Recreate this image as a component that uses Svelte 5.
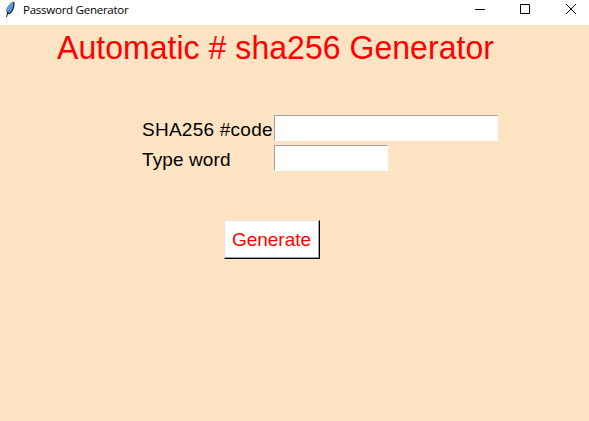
<script>
  let code = $state('');
  let word = $state('');
</script>

<div class="window">
  <header class="titlebar">
    <svg class="feather" width="12" height="18" viewBox="0 0 12 18">
      <path d="M8.7 .8 C5.5 2 2.3 5.5 1.3 9.5 L1.8 12.4 L4.5 12.4 C7.5 10.5 9.6 5.5 8.7 .8Z" fill="#64a5ee" />
      <path d="M8 1 C4.5 3 2 6 1.3 10.5" stroke="#54657a" stroke-width=".8" />
      <path d="M8.8 .8 C9.6 5.5 7.5 10.5 4.5 12.5 L2.3 12.6" stroke="#101820" stroke-width="1.2" />
      <path d="M7 4.5 L3 11" stroke="#3978c2" stroke-width=".8" />
      <path d="M3 10.5 L1.5 16" stroke="#111" stroke-width="1" />
    </svg>
    <span class="caption">Password Generator</span>
    <div class="controls">
      <svg width="10" height="10" viewBox="0 0 10 10"><path d="M0 5.5H10" /></svg>
      <svg width="10" height="10" viewBox="0 0 10 10"><path d="M.5 .5H9.5V9.5H.5Z" /></svg>
      <svg width="10" height="10" viewBox="0 0 10 10"><path d="M0 0L10 10M10 0L0 10" /></svg>
    </div>
  </header>
  <main>
    <h1>Automatic # sha256 Generator</h1>
    <div class="form">
      <label class="wide" for="code">SHA256 #code</label>
      <input id="code" class="long" bind:value={code} />
      <label for="word">Type word</label>
      <input id="word" class="short" bind:value={word} />
    </div>
    <button type="button">Generate</button>
  </main>
</div>

<style>
  :global(body) { margin: 0; overflow: hidden; }
  .window {
    width: 589px;
    height: 421px;
    background: #ffe4c4;
    font-family: "Liberation Sans", Arial, sans-serif;
    overflow: hidden;
  }
  .titlebar {
    display: flex;
    height: 25px;
    box-sizing: border-box;
    padding: 1px 13px 0 5px;
    background: #fff;
  }
  .feather { fill: none; }
  .caption {
    margin-left: 6px;
    font: 11.6px/18px "Open Sans", "Noto Sans", sans-serif;
    letter-spacing: -0.3px;
    color: #000;
    white-space: nowrap;
  }
  .controls { display: flex; gap: 35px; margin: 3px 0 0 auto; }
  .controls svg { fill: none; stroke: #000; stroke-width: 1; }
  .controls svg:last-child { margin-left: 1px; }
  main { display: flex; flex-direction: column; align-items: flex-start; }
  h1 {
    margin: 4px 0 0 57px;
    font-size: 32px;
    font-weight: 400;
    line-height: 38px;
    letter-spacing: 0.04px;
    color: #f00;
    white-space: nowrap;
    transform: scaleY(1.04);
  }
  .form {
    display: grid;
    grid-template-columns: 132px auto;
    row-gap: 4px;
    margin: 48px 0 0 142px;
    justify-items: start;
  }
  label {
    height: 26px;
    font-size: 19px;
    line-height: 30px;
    letter-spacing: 0.1px;
    white-space: nowrap;
    color: #000;
  }
  .wide { letter-spacing: 0.25px; }
  input {
    box-sizing: border-box;
    height: 26px;
    padding: 1px 2px;
    border: 1px solid #fff;
    border-top-color: #a0a0a0;
    border-left-color: #a0a0a0;
    border-radius: 0;
    outline: none;
    background: #fff;
    font: 19px "Liberation Sans", Arial, sans-serif;
  }
  .long { width: 224px; }
  .short { width: 114px; }
  button {
    box-sizing: border-box;
    width: 96px;
    height: 39px;
    margin: 49px 0 0 224px;
    padding: 0 1px 0 0;
    border: 1px solid #e3e3e3;
    border-right-color: #000;
    border-bottom-color: #000;
    border-radius: 0;
    box-shadow: inset -1px -1px #a0a0a0;
    background: #fff;
    color: #f00;
    font: 19px/37px "Liberation Sans", Arial, sans-serif;
  }
</style>
